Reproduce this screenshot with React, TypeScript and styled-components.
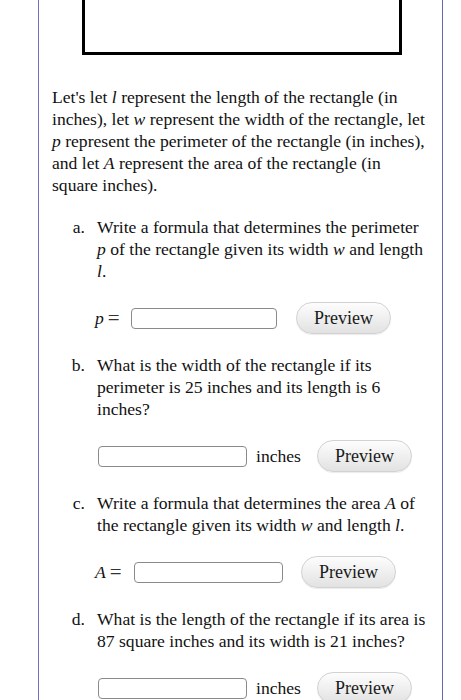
import React from "react";
import styled, { createGlobalStyle } from "styled-components";

const Global = createGlobalStyle`
  html, body { margin: 0; padding: 0; background: #fff; }
  body { font-family: "Liberation Serif", "Times New Roman", serif; color: #111; }
`;

const Frame = styled.div`
  margin-left: 38px;
  width: 405px;
  box-sizing: border-box;
  border-left: 1px solid #7070c4;
  border-right: 1px solid #6666b8;
  min-height: 700px;
  padding: 0 11px 0 13px;
  font-size: 17.6px;
  line-height: 22px;
`;

const Figure = styled.div`
  margin-left: 30px;
  width: 320px;
  height: 55px;
  box-sizing: border-box;
  border: 3px solid #000;
  border-top: none;
`;

const Intro = styled.p`
  margin: 31px 0 20px 0;
`;

const List = styled.div`
  display: flex;
  flex-direction: column;
  gap: 20px;
  padding-right: 3px;
`;

const Item = styled.div`
  display: grid;
  grid-template-columns: 33px 1fr;
  column-gap: 12px;
`;

const Marker = styled.span`
  text-align: right;
`;

const Body = styled.div``;

const Row = styled.div<{ $shift?: number }>`
  display: flex;
  align-items: center;
  height: 32px;
  margin-top: 20px;
  margin-left: ${(p) => p.$shift ?? 0}px;
`;

const MathLabel = styled.span<{ $w: number }>`
  display: inline-flex;
  align-items: center;
  width: ${(p) => p.$w}px;
  white-space: nowrap;
`;

const V = styled.i`
  font-style: italic;
`;

const Eq = styled.span`
  margin-left: 4px;
  font-size: 21px;
  line-height: 22px;
  color: #333;
`;

const Field = styled.input<{ $w: number }>`
  width: ${(p) => p.$w}px;
  height: 21px;
  box-sizing: border-box;
  border: 1px solid #8a8a8a;
  border-radius: 4px;
  background: #fff;
  padding: 0;
  margin: 0;
`;

const Unit = styled.span`
  margin-left: 9px;
  margin-right: 16px;
`;

const Btn = styled.button<{ $gap?: number }>`
  width: 95px;
  height: 32px;
  margin-left: ${(p) => p.$gap ?? 0}px;
  border: 1px solid #d2d2d2;
  border-radius: 16px;
  background: linear-gradient(#fdfdfd, #e2e2e2);
  box-shadow: 0 1px 1px rgba(0,0,0,0.08);
  font-family: "Liberation Serif", "Times New Roman", serif;
  font-size: 18px;
  color: #1a1a1a;
  padding: 0;
`;

export default function App() {
  return (
    <>
      <Global />
      <Frame>
        <Figure />
        <Intro>
          Let's let <V>l</V> represent the length of the rectangle (in inches), let <V>w</V> represent the width of the rectangle, let <V>p</V> represent the perimeter of the rectangle (in inches), and let <V>A</V> represent the area of the rectangle (in square inches).
        </Intro>
        <List>
          <Item>
            <Marker>a.</Marker>
            <Body>
              Write a formula that determines the perimeter <V>p</V> of the rectangle given its width <V>w</V> and length <V>l</V>.
              <Row $shift={-2}>
                <MathLabel $w={36}><V>p</V><Eq>=</Eq></MathLabel>
                <Field $w={146} />
                <Btn $gap={19}>Preview</Btn>
              </Row>
            </Body>
          </Item>
          <Item>
            <Marker>b.</Marker>
            <Body>
              What is the width of the rectangle if its perimeter is 25 inches and its length is 6 inches?
              <Row $shift={1}>
                <Field $w={149} />
                <Unit>inches</Unit>
                <Btn>Preview</Btn>
              </Row>
            </Body>
          </Item>
          <Item>
            <Marker>c.</Marker>
            <Body>
              Write a formula that determines the area <V>A</V> of the rectangle given its width <V>w</V> and length <V>l</V>.
              <Row $shift={-2}>
                <MathLabel $w={39}><V>A</V><Eq>=</Eq></MathLabel>
                <Field $w={149} />
                <Btn $gap={18}>Preview</Btn>
              </Row>
            </Body>
          </Item>
          <Item>
            <Marker>d.</Marker>
            <Body>
              What is the length of the rectangle if its area is 87 square inches and its width is 21 inches?
              <Row $shift={1}>
                <Field $w={149} />
                <Unit>inches</Unit>
                <Btn>Preview</Btn>
              </Row>
            </Body>
          </Item>
        </List>
      </Frame>
    </>
  );
}
